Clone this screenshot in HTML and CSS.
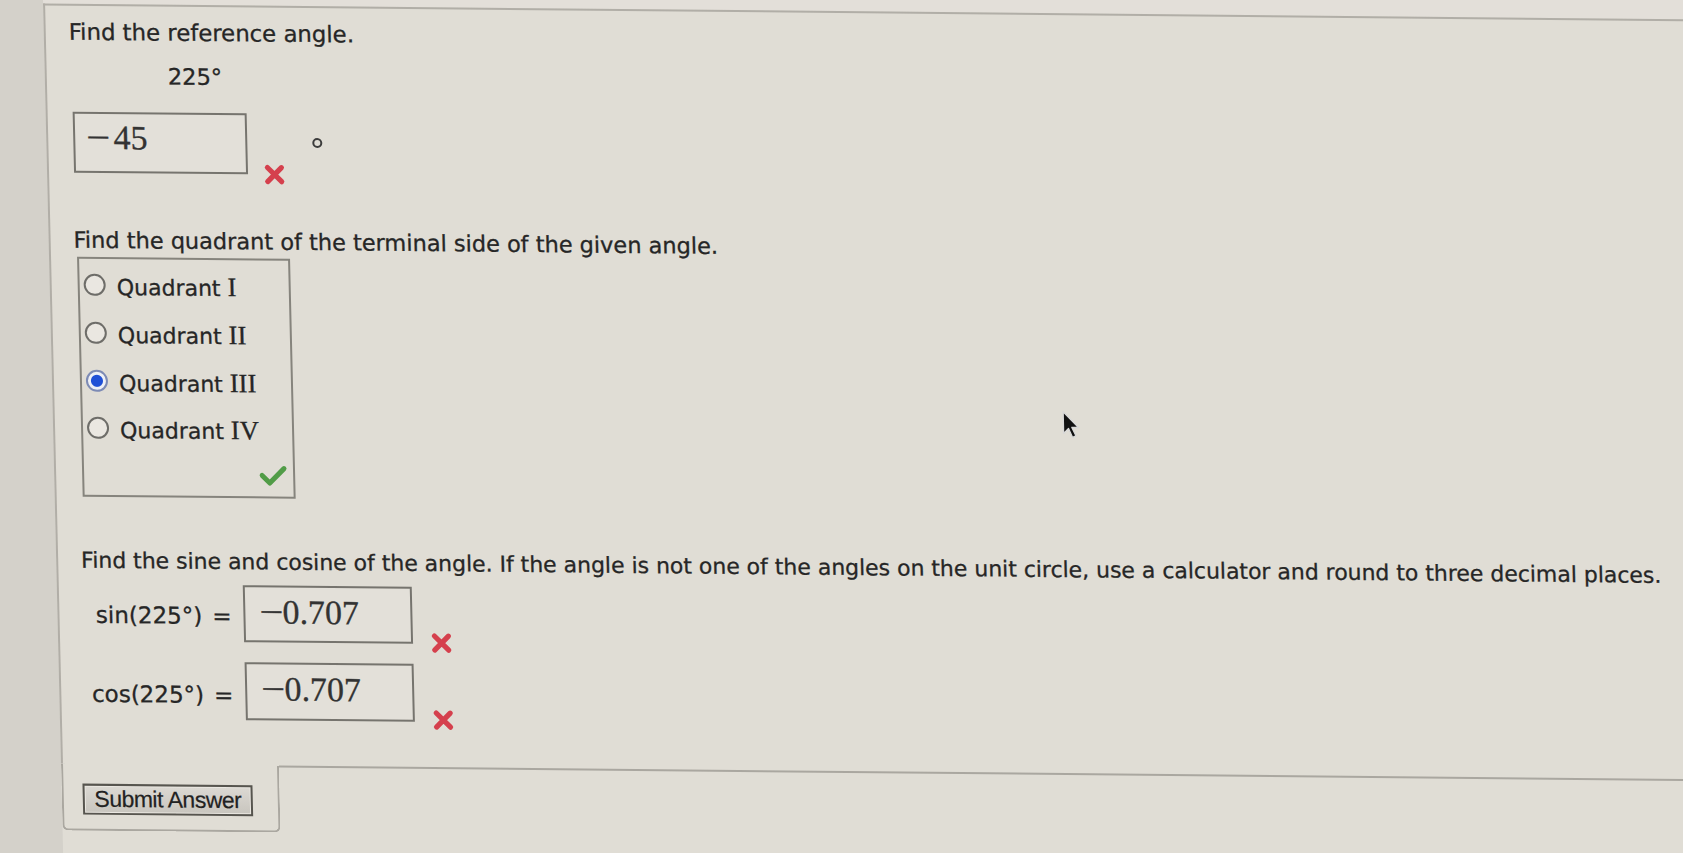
FILE: index.html
```html
<!DOCTYPE html>
<html lang="en">
<head>
<meta charset="utf-8">
<title>Reference angle</title>
<link rel="stylesheet" href="styles.css">
</head>
<body>
<div class="page">
  <div class="main">
    <div class="strip"></div>
    <div class="col">
      <div class="topband"></div>
      <section class="panel">
        <p class="q q1">Find the reference angle.</p>
        <p class="angle">225°</p>
        <div class="row1">
          <div class="ans ans1"><span class="neg">−</span>45</div>
          <svg class="xmark x1" width="23" height="22" viewBox="0 0 23 22"><path d="M4.5 4 L18.5 18 M18.5 4 L4.5 18" stroke="#d5404d" stroke-width="5.2" stroke-linecap="round"/></svg>
          <span class="deg"></span>
        </div>

        <p class="q q2">Find the quadrant of the terminal side of the given angle.</p>
        <div class="choices">
          <div class="opt"><span class="radio"></span><span class="optxt">Quadrant <span class="rn">I</span></span></div>
          <div class="opt"><span class="radio"></span><span class="optxt">Quadrant <span class="rn">II</span></span></div>
          <div class="opt"><span class="radio on"></span><span class="optxt">Quadrant <span class="rn">III</span></span></div>
          <div class="opt"><span class="radio"></span><span class="optxt">Quadrant <span class="rn">IV</span></span></div>
          <div class="checkrow"><svg class="check" width="28" height="22" viewBox="0 0 28 22"><path d="M3 11 L10.5 18.5 L25 4" fill="none" stroke="#519c47" stroke-width="5" stroke-linecap="round" stroke-linejoin="round"/></svg></div>
        </div>

        <p class="q q3">Find the sine and cosine of the angle. If the angle is not one of the angles on the unit circle, use a calculator and round to three decimal places.</p>
        <div class="trig">
          <div class="lbl">sin(225°)<span class="eq">=</span></div>
          <div class="ans ans2"><span class="neg">−</span>0.707</div>
          <svg class="xmark x2" width="23" height="22" viewBox="0 0 23 22"><path d="M4.5 4 L18.5 18 M18.5 4 L4.5 18" stroke="#d5404d" stroke-width="5.2" stroke-linecap="round"/></svg>
          <div class="lbl lbl2">cos(225°)<span class="eq">=</span></div>
          <div class="ans ans2 ans3"><span class="neg">−</span>0.707</div>
          <svg class="xmark x2" width="23" height="22" viewBox="0 0 23 22"><path d="M4.5 4 L18.5 18 M18.5 4 L4.5 18" stroke="#d5404d" stroke-width="5.2" stroke-linecap="round"/></svg>
        </div>
      </section>
      <div class="footer">
        <div class="tab"><button class="submit" type="button">Submit Answer</button></div>
        <div class="rest"></div>
      </div>
    </div>
  </div>
  <svg class="cursor" width="20" height="30" viewBox="0 0 18 27"><path d="M1.5 1.5 V21 L6 16.5 L9.5 24.5 L12.5 23 L9 15.5 H15 Z" fill="#111" stroke="#d8d8d8" stroke-width="1.2" stroke-linejoin="round"/></svg>
</div>
</body>
</html>
```
FILE: styles.css
```css
html {
  background: #d4d1ca;
}
body {
  margin: 0;
  width: 1683px;
  height: 853px;
  overflow: hidden;
}
.page {
  position: relative;
  width: 1760px;
  height: 910px;
  margin: -20px 0 0 -30px;
  transform: skew(1.35deg, 0.55deg);
  transform-origin: 30px 20px;
  font-family: "DejaVu Sans", Verdana, sans-serif;
  color: #262626;
  -webkit-text-stroke: 0.3px #262626;
}
.main {
  display: flex;
  height: 910px;
}
.strip {
  width: 73px;
  flex: none;
  background: #d4d1ca;
}
.col {
  flex: 1;
  display: flex;
  flex-direction: column;
  background: #e0ddd5;
}
.topband {
  height: 23px;
  background: #e3dfd9;
}
.panel {
  border-top: 2px solid #b1aea7;
  border-left: 2px solid #b1aea7;
  padding: 13px 0 45px 23px;
}
.q {
  margin: 0;
  font-size: 22px;
  line-height: 26px;
  white-space: nowrap;
}
.q1 {
  font-size: 22.8px;
}
.angle {
  margin: 18px 0 0 98px;
  font-size: 22.6px;
  line-height: 26px;
}
.row1 {
  display: flex;
  align-items: flex-start;
  height: 72px;
  margin: 23px 0 0 2px;
}
.ans {
  box-sizing: border-box;
  border: 2px solid #76746e;
  background: #e3e0d9;
  font-family: "Liberation Serif", "Times New Roman", serif;
  font-size: 34px;
  line-height: 38px;
  color: #333;
  -webkit-text-stroke: 0.3px #333;
  white-space: nowrap;
}
.ans1 {
  width: 174px;
  height: 61px;
  padding: 4.5px 0 0 11px;
}
.neg {
  display: inline-block;
  transform: scaleX(1.25);
  transform-origin: left center;
  margin-right: 4px;
}
.ans1 .neg {
  margin-right: 8px;
}
.x1 {
  margin: 50px 0 0 15px;
}
.deg {
  width: 10px;
  height: 10px;
  box-sizing: border-box;
  border: 2.5px solid #3c3c3c;
  border-radius: 50%;
  margin: 23.5px 0 0 27px;
}
.q2 {
  margin-top: 43px;
  font-size: 22.45px;
}
.choices {
  display: flex;
  flex-direction: column;
  box-sizing: border-box;
  width: 213px;
  height: 240px;
  margin: 4px 0 0 3px;
  padding: 2.5px 0 0 4px;
  border: 2px solid #86847d;
}
.opt {
  display: flex;
  align-items: center;
  height: 47.7px;
  font-size: 22px;
  line-height: 26px;
}
.radio {
  flex: none;
  width: 22px;
  height: 22px;
  box-sizing: border-box;
  border: 2px solid #6e6d69;
  border-radius: 50%;
  background: #eae7e1;
}
.radio.on {
  border-color: #7d8bb5;
  background: radial-gradient(circle at center, #1f50d6 0 5.5px, #eef0f6 6.5px);
}
.optxt {
  margin-left: 11px;
  padding-top: 4px;
  white-space: nowrap;
}
.rn {
  font-family: "Liberation Serif", "Times New Roman", serif;
  font-size: 26.5px;
}
.checkrow {
  display: flex;
  justify-content: flex-end;
  margin-top: 11px;
  padding-right: 6px;
}
.q3 {
  margin-top: 51px;
  font-size: 21.95px;
}
.trig {
  display: grid;
  grid-template-columns: 146px 169px 23px;
  grid-template-rows: 57px 58px;
  column-gap: 15px;
  row-gap: 20px;
  align-items: start;
  margin-top: 10px;
}
.lbl {
  text-align: right;
  font-size: 23px;
  line-height: 26px;
  margin-top: 18.4px;
  white-space: nowrap;
}
.lbl2 {
  margin-top: 19.5px;
}
.eq {
  margin-left: 10px;
  margin-right: -3px;
}
.ans2 {
  width: 169px;
  height: 57px;
  padding: 6px 0 0 14px;
}
.ans3 {
  height: 58px;
}
.x2 {
  margin: 45px 0 0 2px;
}
.footer {
  display: flex;
}
.tab {
  width: 218px;
  box-sizing: border-box;
  border: 2px solid #aaa7a0;
  border-top: none;
  border-radius: 0 0 6px 6px;
  padding: 20px 0 14px 19px;
}
.submit {
  display: block;
  width: 170px;
  height: 31px;
  box-sizing: border-box;
  padding: 0;
  border: 2px solid #57554f;
  box-shadow: inset 0 0 0 1px #ebe8e2;
  background: linear-gradient(#dcd9d3, #c8c5be);
  font-family: "Liberation Sans", Arial, sans-serif;
  font-size: 23px;
  letter-spacing: -0.5px;
  color: #222;
  -webkit-text-stroke: 0.2px #222;
}
.rest {
  flex: 1;
  border-top: 2px solid #aaa7a0;
}
.cursor {
  position: absolute;
  left: 1082px;
  top: 420px;
}
```
